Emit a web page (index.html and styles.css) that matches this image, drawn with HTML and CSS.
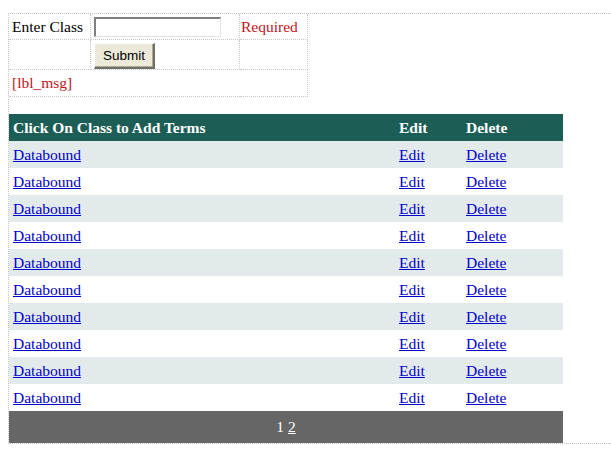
FILE: index.html
```html
<!DOCTYPE html>
<html>
<head>
<meta charset="utf-8">
<title>Classes</title>
<link rel="stylesheet" href="styles.css">
</head>
<body>
<div class="panel">
  <table class="form-table">
    <tr class="r1">
      <td class="c1">Enter Class</td>
      <td class="c2"><input type="text" class="txt"></td>
      <td class="c3"><span class="req">Required</span></td>
    </tr>
    <tr class="r2">
      <td class="c1"></td>
      <td class="c2"><button class="btn">Submit</button></td>
      <td class="c3"></td>
    </tr>
    <tr class="r3">
      <td colspan="3" class="msg">[lbl_msg]</td>
    </tr>
  </table>

  <table class="grid">
    <tr class="head">
      <th class="g1">Click On Class to Add Terms</th>
      <th class="g2">Edit</th>
      <th class="g3">Delete</th>
    </tr>
    <tr class="row"><td><a href="#">Databound</a></td><td><a href="#">Edit</a></td><td><a href="#">Delete</a></td></tr>
    <tr class="alt"><td><a href="#">Databound</a></td><td><a href="#">Edit</a></td><td><a href="#">Delete</a></td></tr>
    <tr class="row"><td><a href="#">Databound</a></td><td><a href="#">Edit</a></td><td><a href="#">Delete</a></td></tr>
    <tr class="alt"><td><a href="#">Databound</a></td><td><a href="#">Edit</a></td><td><a href="#">Delete</a></td></tr>
    <tr class="row"><td><a href="#">Databound</a></td><td><a href="#">Edit</a></td><td><a href="#">Delete</a></td></tr>
    <tr class="alt"><td><a href="#">Databound</a></td><td><a href="#">Edit</a></td><td><a href="#">Delete</a></td></tr>
    <tr class="row"><td><a href="#">Databound</a></td><td><a href="#">Edit</a></td><td><a href="#">Delete</a></td></tr>
    <tr class="alt"><td><a href="#">Databound</a></td><td><a href="#">Edit</a></td><td><a href="#">Delete</a></td></tr>
    <tr class="row"><td><a href="#">Databound</a></td><td><a href="#">Edit</a></td><td><a href="#">Delete</a></td></tr>
    <tr class="alt"><td><a href="#">Databound</a></td><td><a href="#">Edit</a></td><td><a href="#">Delete</a></td></tr>
    <tr class="pager"><td colspan="3"><span>1</span> <a href="#">2</a></td></tr>
  </table>
</div>
</body>
</html>
```

FILE: styles.css
```css
html, body {
  margin: 0;
  padding: 0;
  background: #ffffff;
}
body {
  font-family: "Liberation Serif", "Times New Roman", serif;
  font-size: 15.5px;
  color: #000;
}
.panel {
  margin: 13px 0 0 8px;
  border: 1px dotted #c4c4c4;
  border-right: none;
}
.form-table {
  border-collapse: collapse;
  width: 299px;
}
.form-table td {
  border: 1px dotted #c8c8c8;
  padding: 0 0 0 3px;
  vertical-align: middle;
}
.form-table .c1 { width: 78px; }
.form-table .c2 { width: 145px; }
.form-table .c3 { padding-left: 1px; }
.form-table .r1 td { height: 25px; border-top: none; }
.form-table .r2 td { height: 26px; padding-top: 3px; vertical-align: top; }
.form-table .r3 td { height: 26px; }
.form-table td:first-child { border-left: none; }
.txt {
  display: block;
  box-sizing: border-box;
  width: 127px;
  height: 20px;
  margin: 0;
  padding: 0 2px;
  border-top: 2px solid #808080;
  border-left: 2px solid #808080;
  border-right: 1px solid #e4e4e4;
  border-bottom: 1px solid #e4e4e4;
  background: #fff;
}
.btn {
  display: block;
  box-sizing: border-box;
  width: 61px;
  height: 26px;
  margin: 0;
  padding: 0;
  font-family: "Liberation Sans", Arial, sans-serif;
  font-size: 13.5px;
  color: #000;
  background: #ece9d8;
  border-top: 1px solid #fff;
  border-left: 1px solid #fff;
  border-right: 2px solid #716f64;
  border-bottom: 2px solid #716f64;
  box-shadow: inset -1px -1px 0 #aca899;
}
.req, .msg {
  color: #c0151b;
}
.grid {
  border-collapse: collapse;
  width: 554px;
  margin-top: 17px;
}
.grid th, .grid td {
  padding: 0 0 0 4px;
  text-align: left;
  vertical-align: middle;
  height: 27px;
}
.grid .g1 { width: 382px; }
.grid .g2 { width: 63px; }
.head {
  background: #1c5e55;
  color: #ffffff;
  font-weight: bold;
}
.row { background: #e3eaeb; }
.alt { background: #ffffff; }
.grid a { color: #0000cc; }
.pager td {
  background: #666666;
  color: #ffffff;
  text-align: center;
  height: 32px;
  padding: 0;
}
.pager a { color: #ffffff; }
```
